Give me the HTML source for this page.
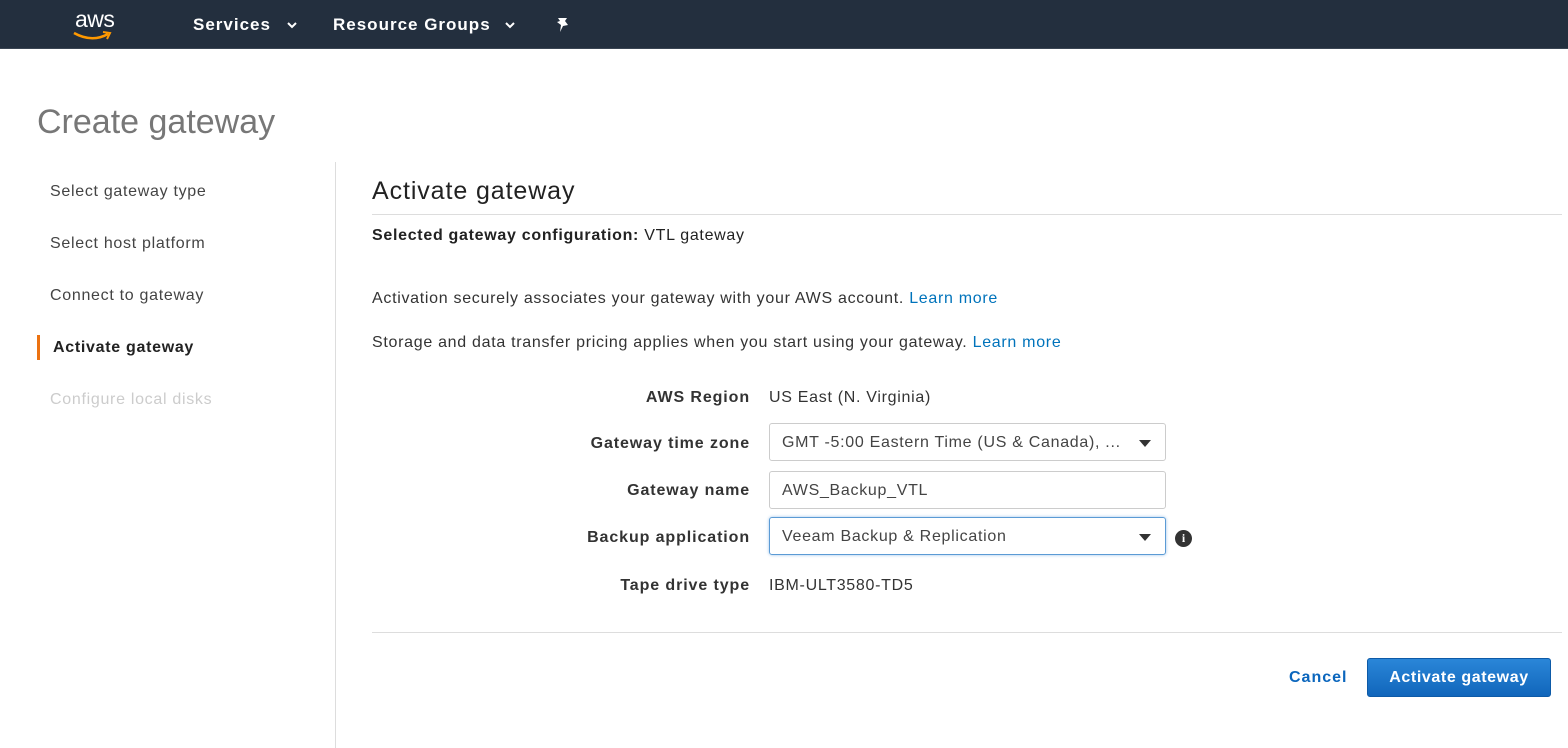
<!DOCTYPE html>
<html><head><style>
*{margin:0;padding:0;box-sizing:border-box}
body{width:1568px;height:748px;background:#fff;font-family:"Liberation Sans",Arial,sans-serif;position:relative;overflow:hidden;color:#333;letter-spacing:0.7px}
.nav{position:absolute;left:0;top:0;width:1568px;height:49px;background:#232f3e;border-bottom:1px solid #3a4553}
.nav .t{position:absolute;top:15px;color:#fff;font-weight:bold;font-size:17px;letter-spacing:1px}
.a{position:absolute;font-size:16px;top:0}
.lbl{position:absolute;font-weight:bold;font-size:16px;text-align:right;right:818px;letter-spacing:0.9px}
.box{position:absolute;left:769px;width:397px;height:38px;border:1px solid #ccc;border-radius:3px;font-size:16px;padding:10px 12px;color:#444}
.caret{position:absolute;right:14px;top:16px;width:0;height:0;border-left:6px solid transparent;border-right:6px solid transparent;border-top:7px solid #333}
</style></head><body>
<div class="nav">
<div style="position:absolute;left:75px;top:6px;color:#fff;font-size:23px;letter-spacing:-0.5px">aws</div>
<svg style="position:absolute;left:72px;top:30px" width="40" height="12"><path d="M2 3 Q20 13 36 4" stroke="#f90" stroke-width="2.5" fill="none"/><path d="M31 2 L38 3 L35 9" stroke="#f90" stroke-width="2" fill="none"/></svg>
<div class="t" style="left:193px">Services</div>
<svg style="position:absolute;left:287px;top:22px" width="10" height="8"><path d="M1 1 L5 5 L9 1" stroke="#fff" stroke-width="2" fill="none"/></svg>
<div class="t" style="left:333px">Resource Groups</div>
<svg style="position:absolute;left:505px;top:22px" width="10" height="8"><path d="M1 1 L5 5 L9 1" stroke="#fff" stroke-width="2" fill="none"/></svg>
<svg style="position:absolute;left:555px;top:16px" width="16" height="18"><path d="M3 2 L12 2 L10 5 L13 9 L8 10 L5 16 L6 9 L2 6 L5 5 Z" fill="#fff"/></svg>
</div>
<div class="a" style="left:37px;top:103px;font-size:34px;color:#777;letter-spacing:0">Create gateway</div>
<div style="position:absolute;left:335px;top:162px;width:1px;height:586px;background:#ddd"></div>
<div class="a" style="left:50px;top:183px;color:#444">Select gateway type</div>
<div class="a" style="left:50px;top:235px;color:#444">Select host platform</div>
<div class="a" style="left:50px;top:287px;color:#444">Connect to gateway</div>
<div style="position:absolute;left:37px;top:335px;width:3px;height:25px;background:#ec7211"></div>
<div class="a" style="left:53px;top:339px;font-weight:bold;color:#222">Activate gateway</div>
<div class="a" style="left:50px;top:391px;color:#ccc">Configure local disks</div>
<div class="a" style="left:372px;top:177px;font-size:25px;color:#222;letter-spacing:0.9px">Activate gateway</div>
<div style="position:absolute;left:372px;top:214px;width:1190px;height:1px;background:#ddd"></div>
<div class="a" style="left:372px;top:227px;color:#222"><b>Selected gateway configuration:</b> VTL gateway</div>
<div class="a" style="left:372px;top:290px">Activation securely associates your gateway with your AWS account. <span style="color:#0073bb">Learn more</span></div>
<div class="a" style="left:372px;top:334px">Storage and data transfer pricing applies when you start using your gateway. <span style="color:#0073bb">Learn more</span></div>
<div class="lbl" style="top:389px">AWS Region</div>
<div class="a" style="left:769px;top:389px">US East (N. Virginia)</div>
<div class="lbl" style="top:435px">Gateway time zone</div>
<div class="box" style="top:423px">GMT -5:00 Eastern Time (US &amp; Canada), ...<div class="caret"></div></div>
<div class="lbl" style="top:482px">Gateway name</div>
<div class="box" style="top:471px">AWS_Backup_VTL</div>
<div class="lbl" style="top:529px">Backup application</div>
<div class="box" style="top:517px;border-color:#5b9bd5;box-shadow:0 0 3px #9cc3ea">Veeam Backup &amp; Replication<div class="caret"></div></div>
<div style="position:absolute;left:1175px;top:530px;width:17px;height:17px;border-radius:50%;background:#333;color:#fff;font-size:12px;font-weight:bold;text-align:center;line-height:17px;font-family:'Liberation Serif',serif;letter-spacing:0">i</div>
<div class="lbl" style="top:577px">Tape drive type</div>
<div class="a" style="left:769px;top:577px">IBM-ULT3580-TD5</div>
<div style="position:absolute;left:372px;top:632px;width:1190px;height:1px;background:#ddd"></div>
<div class="a" style="left:1289px;top:669px;color:#0b66bd;font-weight:bold;letter-spacing:1px">Cancel</div>
<div style="position:absolute;left:1367px;top:658px;width:184px;height:39px;border-radius:3px;background:linear-gradient(#2a86d8,#1166bb);border:1px solid #0d5aa7;color:#fff;font-weight:bold;font-size:16px;text-align:center;line-height:37px;letter-spacing:0.6px">Activate gateway</div>
</body></html>
